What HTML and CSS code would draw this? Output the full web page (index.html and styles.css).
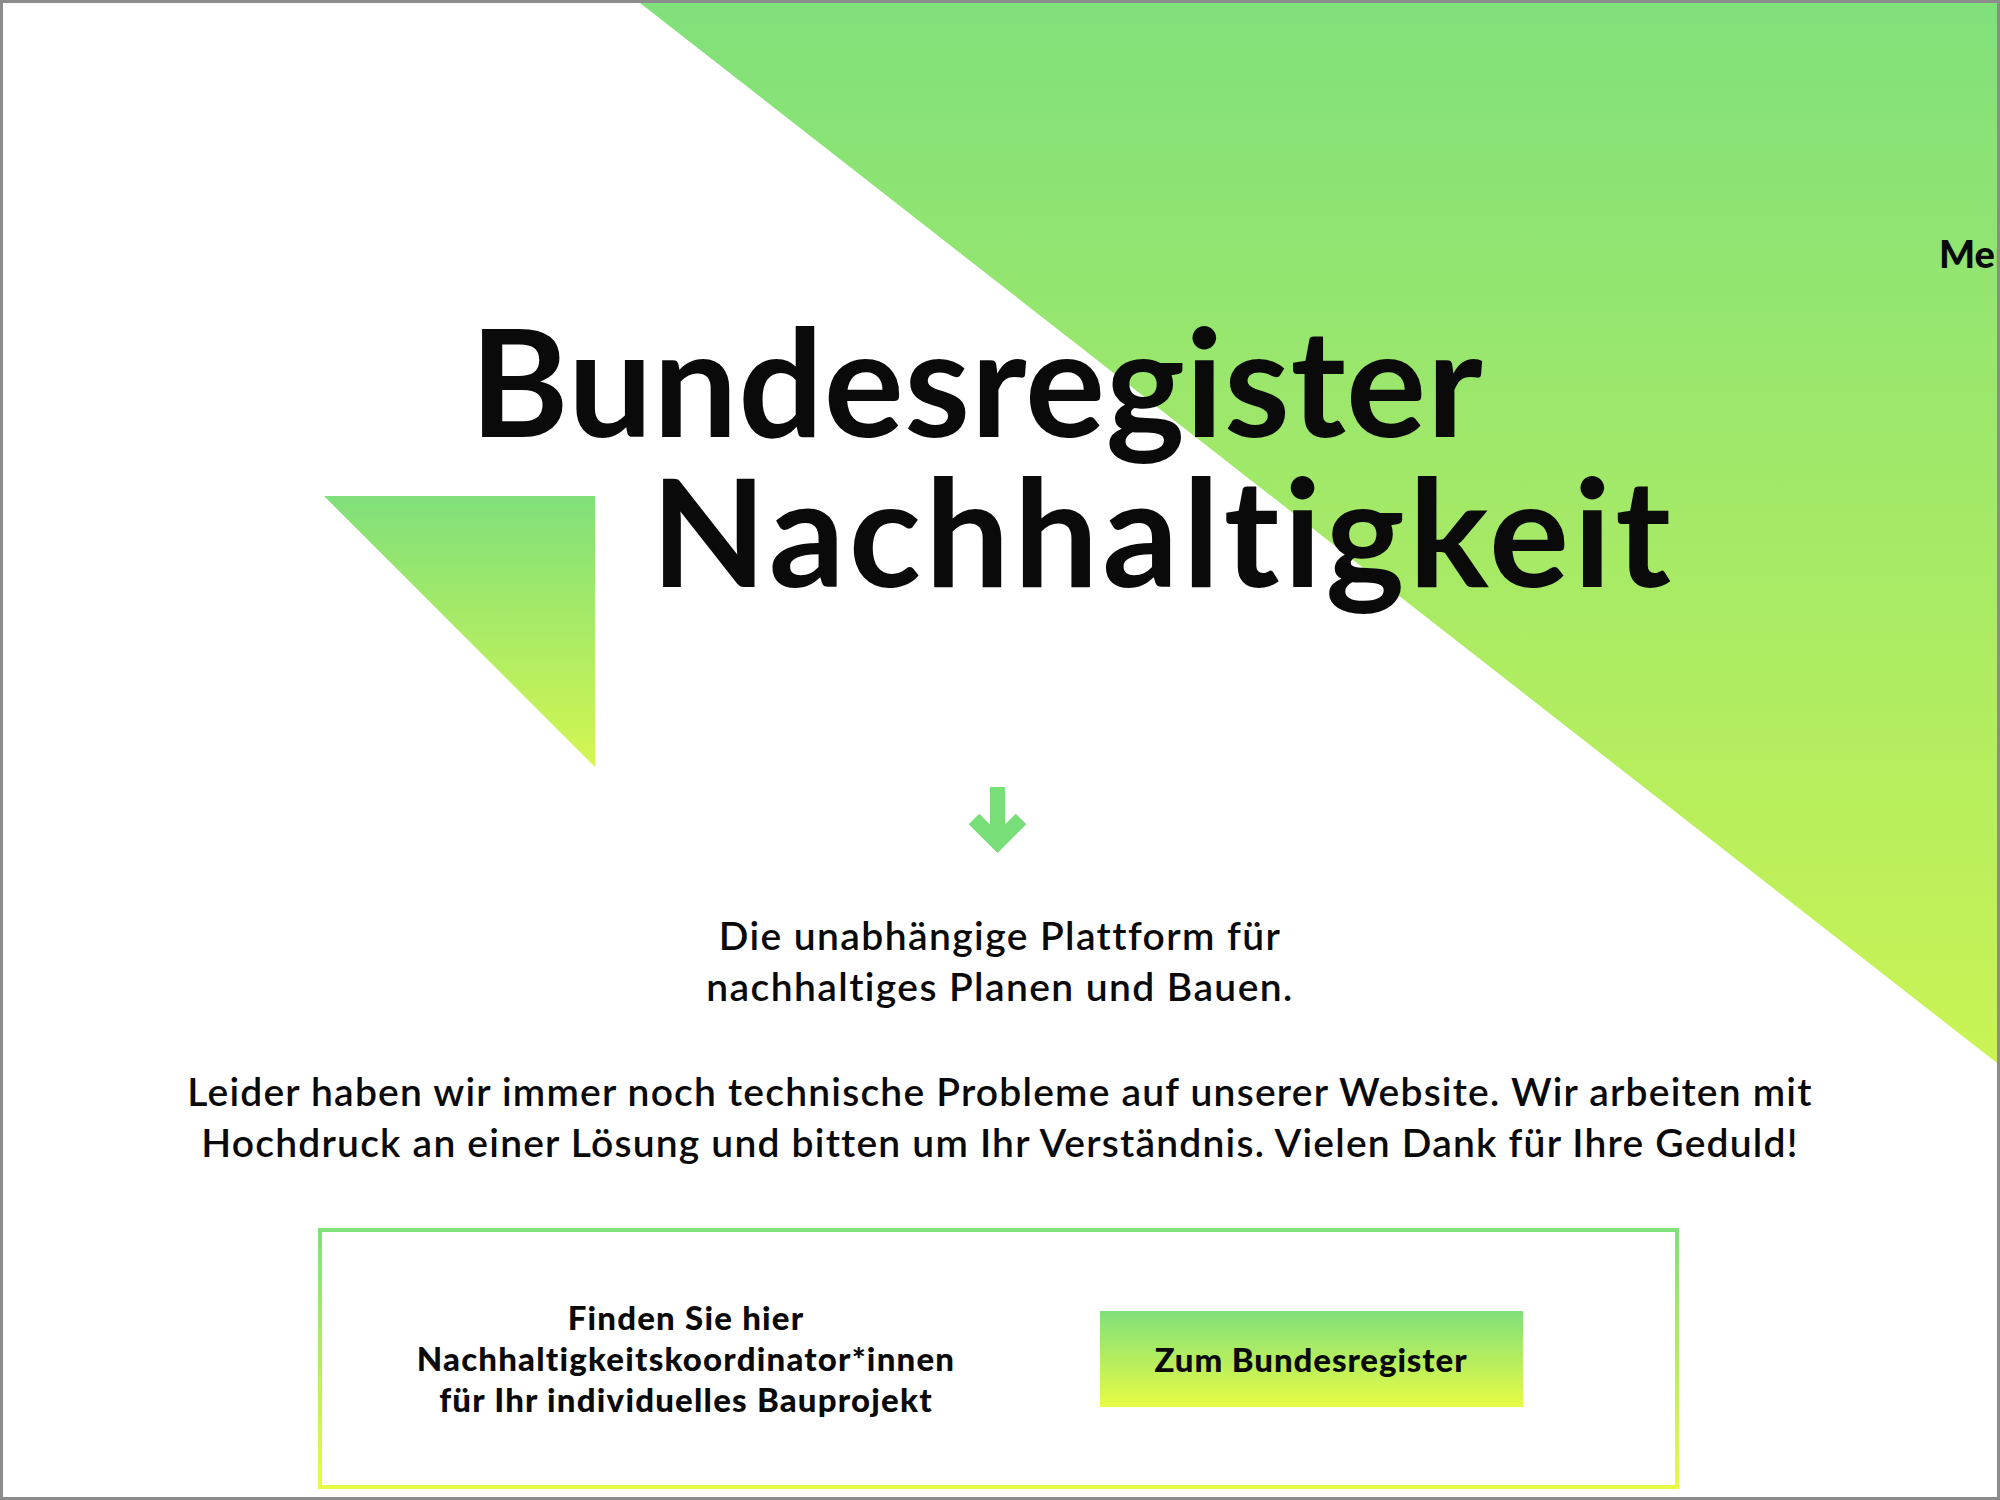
FILE: index.html
```html
<!DOCTYPE html>
<html lang="de">
<head>
<meta charset="utf-8">
<title>Bundesregister Nachhaltigkeit</title>
<link rel="stylesheet" href="styles.css">
</head>
<body>
<div class="frame">
  <div class="bg-tri"></div>
  <header class="top">
    <a class="menu" href="#">Menü</a>
  </header>
  <main class="hero">
    <h1 class="title">
      <span class="line1">Bundesregister</span>
      <span class="line2"><span class="tri"></span><span class="word">Nachhaltigkeit</span></span>
    </h1>
    <div class="arrow">
      <svg width="65" height="67" viewBox="0 0 65 67" aria-hidden="true">
        <line x1="32.5" y1="0" x2="32.5" y2="50" stroke="#78de78" stroke-width="15"/>
        <polyline points="9,32 32.5,55.5 56,32" fill="none" stroke="#78de78" stroke-width="15" stroke-linejoin="miter"/>
      </svg>
    </div>
    <p class="lead">Die unabhängige Plattform für<br>nachhaltiges Planen und Bauen.</p>
    <p class="notice">Leider haben wir immer noch technische Probleme auf unserer Website. Wir arbeiten mit<br>Hochdruck an einer Lösung und bitten um Ihr Verständnis. Vielen Dank für Ihre Geduld!</p>
    <section class="cta">
      <p class="cta-text">Finden Sie hier<br>Nachhaltigkeitskoordinator*innen<br>für Ihr individuelles Bauprojekt</p>
      <a class="cta-btn" href="#">Zum Bundesregister</a>
    </section>
  </main>
</div>
</body>
</html>
```
FILE: styles.css
```css
html, body {
  margin: 0;
  padding: 0;
  background: #fff;
}

.frame {
  width: 2000px;
  height: 1500px;
  box-sizing: border-box;
  border: 3px solid #8c8c8c;
  position: relative;
  overflow: hidden;
  background: #fff;
  font-family: Lato, "Noto Sans", sans-serif;
  font-variant-ligatures: none;
  color: #0a0a0a;
}

.bg-tri {
  position: absolute;
  inset: 0;
  background: linear-gradient(180deg, #80e07a 0%, #e8fb44 100%);
  clip-path: polygon(637px 0, 100% 0, 100% 1060px);
  z-index: 0;
}

.top {
  position: relative;
  z-index: 1;
  display: flex;
  height: 38px;
  padding: 231px 0 0 1936px;
  white-space: nowrap;
}

.menu {
  font-size: 38px;
  line-height: 38px;
  font-weight: 900;
  color: #0a0a0a;
  text-decoration: none;
}

.hero {
  position: relative;
  z-index: 1;
}

.title {
  margin: 32px 0 0;
  font-size: 150px;
  line-height: 150px;
  font-weight: 700;
}

.line1 {
  display: block;
  padding-left: 467px;
  letter-spacing: 0.5px;
}

.line2 {
  display: flex;
  align-items: flex-start;
  padding-left: 321px;
}

.word {
  letter-spacing: 4px;
}

.tri {
  flex: none;
  width: 271px;
  height: 271px;
  margin-top: 42px;
  margin-right: 56px;
  background: linear-gradient(180deg, #80e07a 0%, #d4f650 100%);
  clip-path: polygon(0 0, 100% 0, 100% 100%);
}

.arrow {
  display: flex;
  justify-content: center;
  margin-top: 20px;
  padding-right: 6px;
}

.arrow svg {
  display: block;
}

.lead,
.notice {
  margin: 0;
  font-size: 39px;
  line-height: 51px;
  font-weight: 600;
  letter-spacing: 1.2px;
  text-align: center;
}

.lead {
  margin-top: 56px;
  letter-spacing: 1.4px;
}

.notice {
  margin-top: 54px;
}

.cta {
  margin: 60px 0 0 315px;
  width: 1361px;
  height: 261px;
  box-sizing: border-box;
  border: 4px solid #80e07a;
  border-image: linear-gradient(180deg, #80e07a, #e8fb44) 1;
  display: grid;
  grid-template-columns: 568px 568px;
  column-gap: 57px;
  padding: 0 80px;
  align-items: center;
}

.cta-text {
  margin: 0;
  font-size: 33px;
  line-height: 41px;
  font-weight: 900;
  letter-spacing: 1.2px;
  text-align: center;
}

.cta-btn {
  justify-self: center;
  width: 423px;
  height: 96px;
  display: flex;
  align-items: center;
  justify-content: center;
  background: linear-gradient(180deg, #80e07a 0%, #e8fb44 100%);
  font-size: 33px;
  font-weight: 900;
  letter-spacing: 0.9px;
  color: #0a0a0a;
  text-decoration: none;
}
```
